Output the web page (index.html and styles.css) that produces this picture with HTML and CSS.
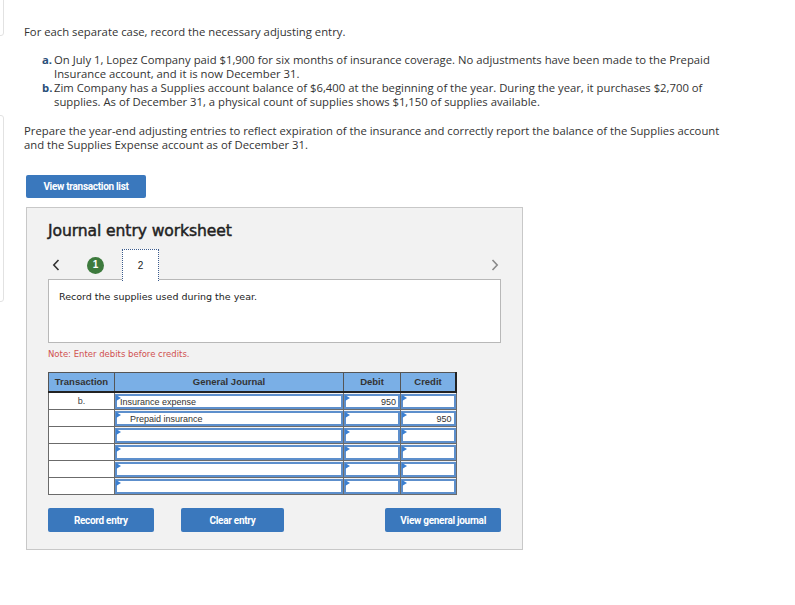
FILE: index.html
```html
<!DOCTYPE html>
<html>
<head>
<meta charset="utf-8">
<link rel="stylesheet" href="styles.css">
</head>
<body>
<div class="side side-top"></div>
<div class="side side-bottom"></div>
<main class="page">
  <p class="intro">For each separate case, record the necessary adjusting entry.</p>
  <ol class="cases">
    <li><b class="lbl">a.</b><span>On July 1, Lopez Company paid $1,900 for six months of insurance coverage. No adjustments have been made to the Prepaid Insurance account, and it is now December 31.</span></li>
    <li><b class="lbl">b.</b><span>Zim Company has a Supplies account balance of $6,400 at the beginning of the year. During the year, it purchases $2,700 of supplies. As of December 31, a physical count of supplies shows $1,150 of supplies available.</span></li>
  </ol>
  <p class="prepare">Prepare the year-end adjusting entries to reflect expiration of the insurance and correctly report the balance of the Supplies account and the Supplies Expense account as of December 31.</p>
  <button class="btn btn-list">View transaction list</button>

  <section class="worksheet">
    <h2 class="ws-title">Journal entry worksheet</h2>
    <div class="ws-nav">
      <span class="chev chev-left">
        <svg width="8" height="12" viewBox="0 0 8 12"><path d="M6.5 1 L1.8 6 L6.5 11" fill="none" stroke="#333" stroke-width="1.6"/></svg>
      </span>
      <span class="step-done">1</span>
      <span class="step-tab">2</span>
      <span class="chev chev-right">
        <svg width="8" height="12" viewBox="0 0 8 12"><path d="M1.5 1 L6.2 6 L1.5 11" fill="none" stroke="#8a8a8a" stroke-width="1.6"/></svg>
      </span>
    </div>
    <div class="ws-box">Record the supplies used during the year.</div>
    <p class="note">Note: Enter debits before credits.</p>

    <table class="journal">
      <thead>
        <tr><th class="c-tr">Transaction</th><th class="c-gj">General Journal</th><th class="c-dr">Debit</th><th class="c-cr">Credit</th></tr>
      </thead>
      <tbody>
        <tr><td class="tcell">b.</td><td class="in"><div class="field">Insurance expense</div></td><td class="in"><div class="field num">950</div></td><td class="in"><div class="field num"></div></td></tr>
        <tr><td class="tcell"></td><td class="in"><div class="field indent">Prepaid insurance</div></td><td class="in"><div class="field num"></div></td><td class="in"><div class="field num">950</div></td></tr>
        <tr><td class="tcell"></td><td class="in"><div class="field"></div></td><td class="in"><div class="field"></div></td><td class="in"><div class="field"></div></td></tr>
        <tr><td class="tcell"></td><td class="in"><div class="field"></div></td><td class="in"><div class="field"></div></td><td class="in"><div class="field"></div></td></tr>
        <tr><td class="tcell"></td><td class="in"><div class="field"></div></td><td class="in"><div class="field"></div></td><td class="in"><div class="field"></div></td></tr>
        <tr><td class="tcell"></td><td class="in"><div class="field"></div></td><td class="in"><div class="field"></div></td><td class="in"><div class="field"></div></td></tr>
      </tbody>
    </table>

    <div class="ws-actions">
      <button class="btn btn-record">Record entry</button>
      <button class="btn btn-clear">Clear entry</button>
      <button class="btn btn-gj">View general journal</button>
    </div>
  </section>
</main>
</body>
</html>
```
FILE: styles.css
```css
html, body { margin: 0; padding: 0; background: #fff; }
body { position: relative; width: 795px; height: 605px; overflow: hidden; font-family: "Open Sans", "Lato", sans-serif; color: #333; }

.side { position: absolute; left: -6px; width: 8px; border: 1px solid #e2e2e2; border-radius: 3px; background: #fff; }
.side-top { top: -4px; height: 38px; }
.side-bottom { top: 115px; height: 185px; }

.page { padding: 25px 0 0 24px; font-size: 11.3px; line-height: 14px; }
.intro { margin: 0 0 14px; }
.cases { list-style: none; margin: 0; padding: 0 78px 0 18px; }
.cases li { display: flex; }
.lbl { width: 12px; flex: none; color: #2a4f7a; font-weight: 700; }
.cases li span { flex: 1; }
.prepare { margin: 15px 68px 0 0; }

.btn { display: inline-flex; align-items: center; justify-content: center; border: none; border-radius: 2px; background: #3a78bd; color: #fff; font-family: "Liberation Sans Narrow", "Roboto", sans-serif; font-weight: 700; font-size: 10px; letter-spacing: -0.3px; height: 24px; padding: 0; cursor: pointer; }
.btn-list { width: 120px; margin: 23px 0 0 2px; height: 23px; }

.worksheet { margin: 9px 0 0 2px; width: 497px; height: 343px; box-sizing: border-box; border: 1px solid #c8c8c8; background: #f2f2f2; padding: 0 21px; font-family: "DejaVu Sans", sans-serif; }
.ws-title { margin: 0; padding-top: 14px; font-size: 15.6px; font-weight: 400; -webkit-text-stroke: 0.45px #222; letter-spacing: -0.1px; color: #222; line-height: 18px; }
.ws-nav { display: flex; align-items: center; height: 32px; margin-top: 9px; position: relative; }
.chev { display: flex; align-items: center; }
.chev-left { margin-left: 4px; }
.step-done { width: 17px; height: 17px; border-radius: 50%; background: #3d7a3d; color: #fff; font-size: 10px; font-weight: 700; display: flex; align-items: center; justify-content: center; margin-left: 27px; font-family: "Liberation Sans", sans-serif; }
.step-tab { width: 37px; height: 32px; box-sizing: border-box; border: 1px dotted #3a5a8c; border-bottom: none; background: #fff; display: flex; align-items: center; justify-content: center; font-size: 10px; margin-left: 18px; font-family: "Liberation Sans", sans-serif; color: #222; }
.chev-right { margin-left: auto; margin-right: 2px; }

.ws-box { height: 64px; box-sizing: border-box; border: 1px solid #b8b8b8; background: #fff; padding: 10px 10px; font-size: 9.5px; color: #222; margin-top: -2px; }
.note { margin: 6px 0 0; font-size: 8.5px; color: #d05050; line-height: 11px; }

.journal { margin-top: 12px; border-collapse: collapse; font-family: "Liberation Sans", sans-serif; font-size: 9px; width: 407px; table-layout: fixed; }
.journal th { background: #7aafe6; color: #333; font-weight: 700; height: 18px; border: 1px solid #555; border-bottom: 2px solid #222; padding: 0; font-size: 9.5px; }
.journal th.c-cr { border-right: 2px solid #222; }
.c-tr { width: 65px; }
.c-gj { width: 228px; }
.c-dr { width: 56px; }
.c-cr { width: 54px; }
.journal td { border: 1px solid #6b6b6b; height: 16px; padding: 0; }
.journal td.tcell { background: #fff; text-align: center; color: #444; }
.journal td.in { padding: 0; }
.field { position: relative; height: 15px; box-sizing: border-box; background: #fff; border: 2px solid #5d8fcc; line-height: 12px; padding: 0 3px; color: #333; font-size: 9px; }
.field::before { content: ""; position: absolute; left: -1px; top: -1px; border-left: 5px solid #3b7fd0; border-top: 3px solid transparent; border-bottom: 3px solid transparent; }
.field.num { text-align: right; padding-right: 2px; }
.field.indent { padding-left: 13px; }

.ws-actions { display: flex; margin-top: 13px; }
.btn-record { width: 106px; }
.btn-clear { width: 104px; margin-left: 27px; }
.btn-gj { width: 116px; margin-left: 101px; }
```
